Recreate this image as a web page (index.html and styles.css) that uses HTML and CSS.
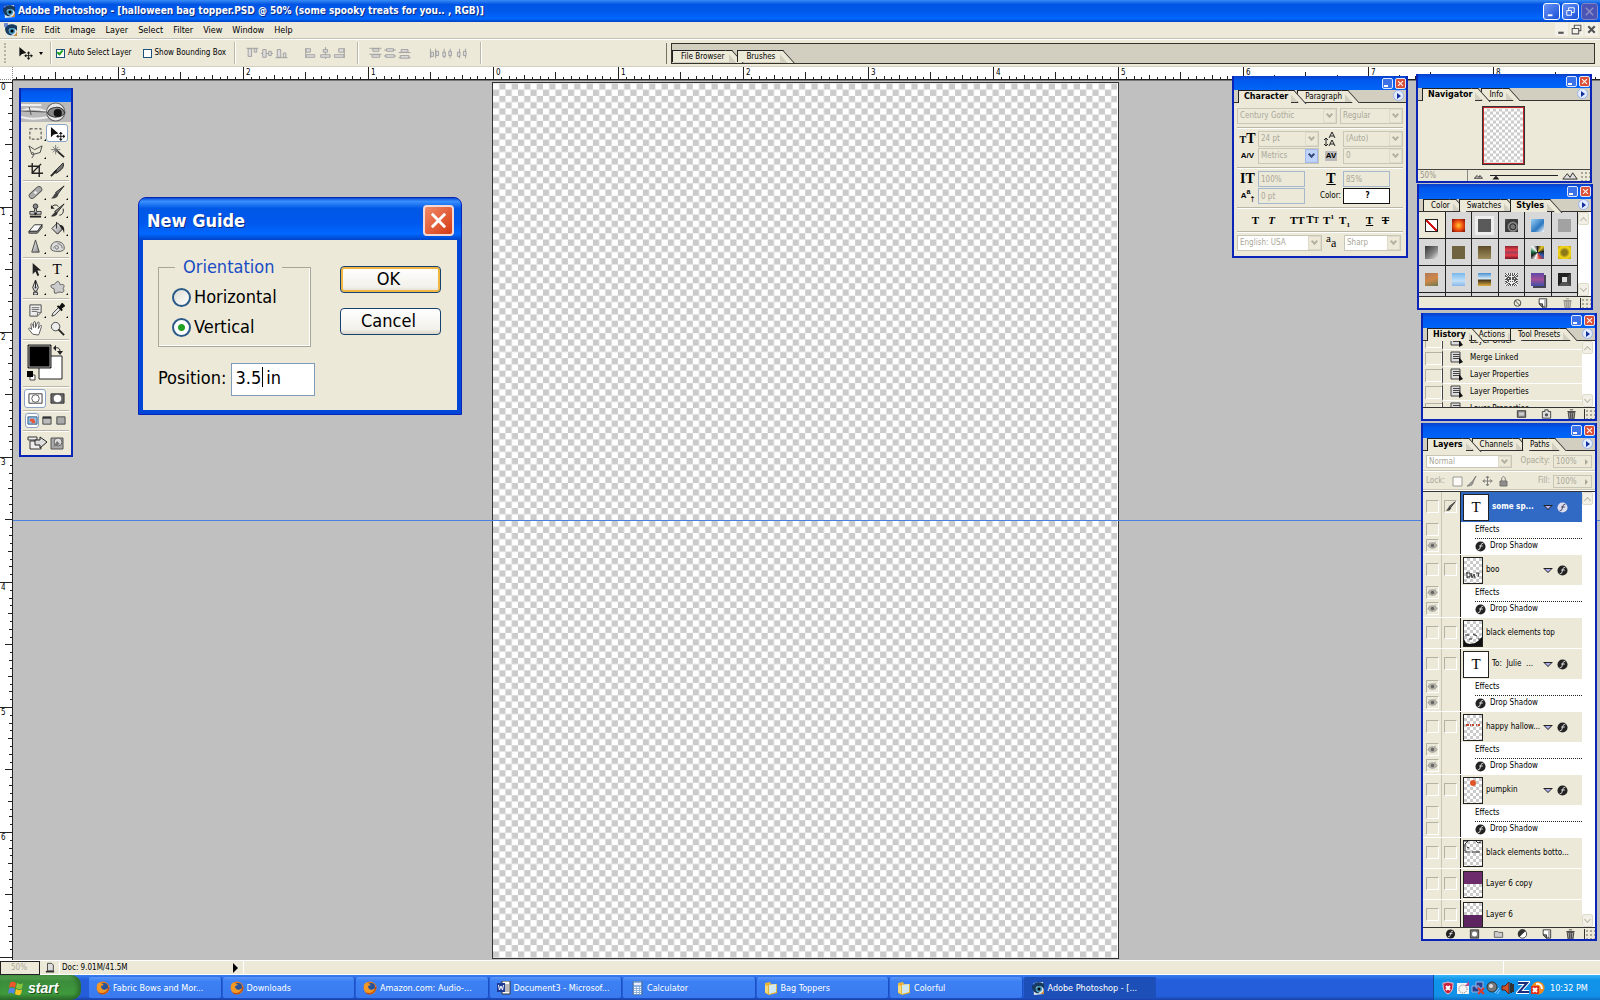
FILE: index.html
```html
<!DOCTYPE html>
<html lang="en">
<head>
    <meta charset="UTF-8">
    <meta name="viewport" content="width=device-width, initial-scale=1.0">
    <title>Adobe Photoshop - [halloween bag topper.PSD]</title>
    <link rel="stylesheet" href="styles.css">
</head>
<body>
    <svg class="defs" aria-hidden="true">
        <defs>
            <linearGradient id="metal" x1="0" y1="0" x2="1" y2="1"><stop offset="0" stop-color="#fff"/><stop offset="1" stop-color="#888"/></linearGradient>
            <pattern id="checks" width="2" height="2" patternUnits="userSpaceOnUse">
                <rect width="2" height="2" fill="#fff"/>
                <path d="M1 0h1v1h-1zM0 1h1v1H0z" fill="#cbcbcb"/>
            </pattern>
            <pattern id="smallchecks" width="6" height="6" patternUnits="userSpaceOnUse">
                <rect width="6" height="6" fill="#fff"/>
                <path d="M3 0h3v3H3zM0 3h3v3H0z" fill="#cbcbcb"/>
            </pattern>
            <pattern id="ticks-x" x="105" width="125" height="13" patternUnits="userSpaceOnUse">
                <path d="M.5 0v13M8.5 10v3M16.5 9v4M23.5 10v3M31.5 8v5M39.5 10v3M47.5 9v4M55.5 10v3M62.5 5v8M70.5 10v3M78.5 9v4M86.5 10v3M94.5 8v5M102.5 10v3M109.5 9v4M117.5 10v3" stroke="#222"/>
            </pattern>
            <pattern id="ticks-y" y="2" width="13" height="125" patternUnits="userSpaceOnUse">
                <path d="M0 .5h13M10 8.5h3M9 16.5h4M10 23.5h3M8 31.5h5M10 39.5h3M9 47.5h4M10 55.5h3M5 62.5h8M10 70.5h3M9 78.5h4M10 86.5h3M8 94.5h5M10 102.5h3M9 109.5h4M10 117.5h3" stroke="#222"/>
            </pattern>

            <symbol id="ps" viewBox="0 0 14 14">
                <path d="M2 2l10-1 1 12-10 1z" fill="#dfeaf2"/>
                <path d="M1 5c2-4 8-5 12-2v5c-2-3-5-4-8-2-1 3 1 5 4 6-4 1-8-1-8-7z" fill="#173a5e"/>
                <circle cx="8" cy="8" r="3" fill="#3b8fb5"/><circle cx="8" cy="8" r="1.500" fill="#000"/>
                <path d="M9 13c2-1 4-3 4-6v6z" fill="#c98a3c"/><path d="M0 0h4v4H0z" fill="#1c50c8" opacity=".6"/>
            </symbol>
            <symbol id="movetool" viewBox="0 0 16 16">
                <path d="M1 1v11l3-3 5-1z" fill="#111"/>
                <path d="M11.500 7v8M7.500 11h8" stroke="#111"/><path d="M11.500 6l2 2.500h-4zM11.500 16l2-2.500h-4zM6.500 11L9 9v4zM16.500 11L14 9v4z" fill="#111"/>
            </symbol>
            <symbol id="marquee" viewBox="0 0 16 16"><rect x="2" y="3" width="12" height="11" fill="none" stroke="#333" stroke-dasharray="3 2"/></symbol>
            <symbol id="lasso" viewBox="0 0 16 16"><path d="M4 11L1 2l6 4 8-4-2 7-7 2c-2 1-3-1-1-2 2 0 1 4-1 6" fill="none" stroke="#444"/></symbol>
            <symbol id="wand" viewBox="0 0 16 16"><path d="M6 6l9 8" stroke="#222" stroke-width="2"/><path d="M6 1v10M1 6h10M3 3l6 6M9 3L3 9" stroke="#777"/></symbol>
            <symbol id="crop" viewBox="0 0 16 16"><path d="M4.500 1v11H16M0 4.500h12V16M4 12L14 2" fill="none" stroke="#222" stroke-width="1.500"/></symbol>
            <symbol id="slice" viewBox="0 0 16 16"><path d="M4 11L14 1c1 3 0 5-2 7l-5 4z" fill="#777" stroke="#222"/><path d="M1 15l6-6" stroke="#222" stroke-width="2"/></symbol>
            <symbol id="heal" viewBox="0 0 16 16"><rect x="0" y="5" width="16" height="6" rx="3" transform="rotate(-42 8 8)" fill="#aaa" stroke="#555"/><path d="M6 8l2-2 2 2-2 2z" fill="#eee"/></symbol>
            <symbol id="brush" viewBox="0 0 16 16"><path d="M15 1L8 10 6 8z" fill="#777" stroke="#222"/><path d="M7 8l2 2c-1 4-5 5-8 4 3-1 3-5 6-6z" fill="#444"/></symbol>
            <symbol id="stamp" viewBox="0 0 16 16"><circle cx="8" cy="3.500" r="2.500" fill="#888" stroke="#333"/><path d="M7 6h2v3h5v3H2V9h5z" fill="#ccc" stroke="#333"/><path d="M6 10h4l-2 3z" fill="#111"/><path d="M2 14.500h12" stroke="#222" stroke-width="2"/></symbol>
            <symbol id="histbrush" viewBox="0 0 16 16"><path d="M15 1L7 11 5 9z" fill="#888" stroke="#222"/><path d="M6 9l2 2c-1 3-4 4-7 3z" fill="#333"/><path d="M2 4c3-3 6-2 7 0M14 6c1 4-1 7-4 7" fill="none" stroke="#222"/><path d="M1 2v4h4z" fill="#222"/></symbol>
            <symbol id="eraser" viewBox="0 0 16 16"><path d="M1 11l6-7h8l-5 7z" fill="#f8f8f8" stroke="#333"/><path d="M10 11l5-7v3l-5 6H1v-2z" fill="#999" stroke="#333"/></symbol>
            <symbol id="bucket" viewBox="0 0 16 16"><path d="M2 8l6-6 6 6-6 6z" fill="url(#metal)" stroke="#222"/><path d="M7 8V1" stroke="#222"/><path d="M10 4c4 0 6 3 5 9-1-3-1-4-3-5z" fill="#222"/></symbol>
            <symbol id="sharpen" viewBox="0 0 16 16"><path d="M8 1l4 13H4z" fill="url(#metal)" stroke="#444"/></symbol>
            <symbol id="sponge" viewBox="0 0 16 16"><path d="M1 9c0-4 4-7 8-6 4 0 7 4 6 8-1 3-12 3-14 0z" fill="#ddd" stroke="#555"/><path d="M4 10c0-3 5-4 5-1s-4 2-3 0M8 5c3 0 5 2 5 5" fill="none" stroke="#666"/></symbol>
            <symbol id="select" viewBox="0 0 16 16"><path d="M5 1v12l3-3 2 5 2-1-2-5h4z" fill="#222"/></symbol>
            <symbol id="pen" viewBox="0 0 16 16"><path d="M8 0l3 8-2 4H7L5 8zM6 13h4v3H6z" fill="#ddd" stroke="#222"/><path d="M8 1v7" stroke="#222"/><circle cx="8" cy="8" r="1" fill="#222"/></symbol>
            <symbol id="shape" viewBox="0 0 16 16"><path d="M7 2c3-2 3 2 4 3 4-1 5 1 3 4 2 3 0 5-3 4-2-1-4 2-6 1-1-2 0-3-1-5-3 0-4-3-2-4 2 0 3 0 5-3z" fill="#ccc" stroke="#555"/></symbol>
            <symbol id="note" viewBox="0 0 16 16"><path d="M2 2h12v8l-4 4H2z" fill="#eee" stroke="#444"/><path d="M4 5h8M4 7h8M4 9h6M10 14v-4h4" fill="none" stroke="#666"/></symbol>
            <symbol id="dropper" viewBox="0 0 16 16"><path d="M2 14l1-3 7-7 2 2-7 7z" fill="#eee" stroke="#333"/><path d="M8 3l5 5M10 5l3-4 2 2-4 3z" stroke="#111" stroke-width="2"/></symbol>
            <symbol id="hand" viewBox="0 0 16 16"><path d="M5 14L1 9c-1-2 1-2 3 0L3 4c0-2 2-1 2 0l1 3V2c0-2 2-2 2 0v5l2-5c0-1 2-1 2 0l-1 6 2-3c1-1 2 0 1 2-1 3-2 7-3 8z" fill="#fff" stroke="#555"/></symbol>
            <symbol id="loupe" viewBox="0 0 16 16"><circle cx="6" cy="6" r="4.500" fill="#eee" stroke="#444"/><path d="M9 9l6 6" stroke="#222" stroke-width="2"/></symbol>
            <symbol id="fx" viewBox="0 0 12 12"><circle cx="6" cy="6" r="5.500" fill="#222"/><path d="M3 9c2 1 2 0 3-3s1-4 3-3M4.500 5.500h4" fill="none" stroke="#eee"/></symbol>
            <symbol id="fxlight" viewBox="0 0 12 12"><circle cx="6" cy="6" r="5.500" fill="#dde"/><path d="M3 9c2 1 2 0 3-3s1-4 3-3M4.500 5.500h4" fill="none" stroke="#335"/></symbol>
            <symbol id="eye" viewBox="0 0 12 12"><path d="M1 6c2-4 8-4 10 0-2 4-8 4-10 0z" fill="#bbb8a8" stroke="#999"/><circle cx="6" cy="6" r="2" fill="#666"/><path d="M2 3l2 1M8 3l2-1" stroke="#aaa"/></symbol>
            <symbol id="trash" viewBox="0 0 12 12"><path d="M2 4h8l-1 8H3z" fill="#999" stroke="#333"/><path d="M1 3h10M4 1h4M5 5v6M7 5v6" stroke="#333"/></symbol>
            <symbol id="newpage" viewBox="0 0 12 12"><path d="M2 1h9v10H6L2 7z" fill="#fff" stroke="#222"/><path d="M2 7h4v4z" fill="#999" stroke="#222"/><path d="M9 2v8H6" fill="none" stroke="#555"/></symbol>
            <symbol id="state" viewBox="0 0 14 14"><path d="M1 1h9v10H1z" fill="#ddd" stroke="#444"/><path d="M3 3.500h7M3 5.500h7M3 7.500h6" stroke="#444"/><path d="M9 6v7l4-2z" fill="#111"/></symbol>
            <symbol id="fox" viewBox="0 0 14 14"><circle cx="7" cy="7" r="6.500" fill="#e57818"/><circle cx="8" cy="6" r="4" fill="#27539c"/><path d="M1 4c1-3 3-3 4-2l3 2-3 1c0 4 4 5 7 2-1 6-11 7-11 0z" fill="#f39a26"/><path d="M3 12c4 2 9 0 10-6" fill="none" stroke="#b5400c"/></symbol>
            <symbol id="word" viewBox="0 0 14 14"><path d="M5 0h8v13H5z" fill="#fff" stroke="#333"/><path d="M8 4h4M8 6h4M8 8h4M8 10h4" stroke="#777"/><path d="M0 2h8v9H0z" fill="#1d3a94"/><path d="M1.500 4l1 5 1.500-4 1.500 4 1-5" fill="none" stroke="#fff"/></symbol>
            <symbol id="calc" viewBox="0 0 14 14"><path d="M3 0h9v14H3z" fill="#8fb2dd" stroke="#4a6c9b"/><path d="M4 2h7v2H4z" fill="#eef"/><path d="M4 6.500h7M4 8.500h7M4 10.500h7M4 12.500h7" stroke="#fff" stroke-dasharray="2 1"/></symbol>
            <symbol id="folder" viewBox="0 0 14 14"><path d="M1 2l5-1 1 2h6v9l-8 2-4-2z" fill="#e8b43a"/><path d="M5 4l7-1v8l-7 2z" fill="#cfe8f2"/><path d="M1 4l3 1v8l-3-2z" fill="#f7da7a"/></symbol>
        </defs>
    </svg>

    <header class="titlebar">
        <svg class="app-icon"><use href="#ps"/></svg>
        <h1>Adobe Photoshop - [halloween bag topper.PSD @ 50% (some spooky treats for you.. , RGB)]</h1>
        <div class="window-buttons">
            <button class="win" aria-label="Minimize"><svg viewBox="0 0 16 16"><path d="M4 12h5" stroke="#fff" stroke-width="2"/></svg></button>
            <button class="win" aria-label="Restore"><svg viewBox="0 0 16 16"><path d="M6 7V4h6v5H9M4 7h5v5H4z" fill="none" stroke="#fff"/></svg></button>
            <button class="win faded" aria-label="Close"><svg viewBox="0 0 16 16"><path d="M4 4l8 8M12 4l-8 8" stroke="#8f8fc4" stroke-width="1.500"/></svg></button>
        </div>
    </header>

    <nav class="menubar">
        <svg class="app-icon"><use href="#ps"/></svg>
        <button>File</button><button>Edit</button><button>Image</button><button>Layer</button><button>Select</button><button>Filter</button><button>View</button><button>Window</button><button>Help</button>
        <div class="doc-buttons">
            <button aria-label="Minimize document"><svg viewBox="0 0 12 12"><path d="M3 9h5" stroke="#555" stroke-width="2"/></svg></button>
            <button aria-label="Restore document"><svg viewBox="0 0 12 12"><path d="M4 5V2h6v5H8M2 5h6v5H2z" fill="none" stroke="#555"/></svg></button>
            <button aria-label="Close document"><svg viewBox="0 0 12 12"><path d="M3 3l6 6M9 3L3 9" stroke="#555" stroke-width="2"/></svg></button>
        </div>
    </nav>

    <div class="options">
        <div class="options-tools">
            <span class="grip"></span>
            <button class="current-tool" aria-label="Move tool"><svg><use href="#movetool"/></svg><i></i></button>
            <span class="vline"></span>
            <label class="check"><input type="checkbox" checked>Auto Select Layer</label>
            <label class="check second"><input type="checkbox">Show Bounding Box</label>
            <span class="vline"></span>
            <div class="align">
                <svg viewBox="0 0 48 14"><path d="M0 1.500h14M17 7.500h14M34 12.500h14" stroke="#999"/><path d="M2 2h4v9H2zM9 2h3v4H9zM19 3h4v9h-4zM26 5h3v5h-3zM36 3h4v9h-4zM43 7h3v5h-3z" fill="#ddd" stroke="#999"/></svg>
                <svg viewBox="0 0 48 14"><path d="M1.500 1v12M24.500 0v14M46.500 1v12" stroke="#999"/><path d="M2 2h5v4H2zM2 9h10v3H2zM22 3h5v3h-5zM19 9h11v3H19zM40 2h6v4h-6zM35 9h11v3H35z" fill="#ddd" stroke="#999"/></svg>
            </div>
            <span class="vline"></span>
            <div class="align">
                <svg viewBox="0 0 48 14"><path d="M0 1.500h14M0 8.500h14M17 3.500h14M17 10.500h14M34 6.500h14M34 12.500h14" stroke="#999"/><path d="M4 2h7v3H4zM3 9h9v3H3zM20 2h8v3h-8zM19 9h10v3H19zM37 3h8v3h-8zM36 10h10v3H36z" fill="#ddd" stroke="#999"/></svg>
                <svg viewBox="0 0 48 14"><path d="M3.500 2v11M9.500 2v11M19.500 2v11M26.500 2v11M37.500 2v11M44.500 2v11" stroke="#999"/><path d="M4 6h3v5H4zM10 5h3v5h-3zM18 6h3v5h-3zM25 5h3v5h-3zM35 6h3v5h-3zM42 5h3v5h-3z" fill="#ddd" stroke="#999"/></svg>
            </div>
            <span class="vline"></span>
        </div>
        <div class="well">
            <div class="tabs"><button class="tab">File Browser</button><button class="tab">Brushes</button></div>
        </div>
    </div>

    <main class="workspace">
        <div class="ruler-corner"></div>
        <svg class="ruler-x">
            <rect width="100%" height="13" fill="url(#ticks-x)"/>
            <text x="108" y="8">3</text><text x="233" y="8">2</text><text x="358" y="8">1</text><text x="483" y="8">0</text><text x="608" y="8">1</text><text x="733" y="8">2</text><text x="858" y="8">3</text><text x="983" y="8">4</text><text x="1108" y="8">5</text><text x="1233" y="8">6</text><text x="1358" y="8">7</text><text x="1483" y="8">8</text>
        </svg>
        <svg class="ruler-y">
            <rect width="13" height="100%" fill="url(#ticks-y)"/>
            <text x="1" y="10">0</text><text x="1" y="135">1</text><text x="1" y="260">2</text><text x="1" y="385">3</text><text x="1" y="510">4</text><text x="1" y="635">5</text><text x="1" y="760">6</text>
        </svg>
        <div class="canvas">
            <svg class="document" viewBox="0 0 100 140" shape-rendering="crispEdges"><rect width="100" height="140" fill="url(#checks)"/></svg>
            <div class="guide"></div>
        </div>

        <section class="toolbox" aria-label="Tools">
            <div class="palette-title"></div>
            <svg class="banner" viewBox="0 0 49 20" preserveAspectRatio="none">
                <rect width="49" height="20" fill="#b9b9b9"/>
                <path d="M0 9c8-3 17-3 26 1M0 3h20M0 15c9 3 18 2 27 0" fill="none" stroke="#eee" stroke-width="2"/>
                <path d="M0 9l25 1M8 5l2 8" stroke="#555"/>
                <circle cx="34" cy="10" r="9" fill="#e8e8e8" stroke="#666"/>
                <path d="M26 11c2-7 14-8 17 0-4 5-13 6-17 0z" fill="#888" stroke="#333"/>
                <circle cx="36" cy="11" r="4" fill="#111"/>
            </svg>
            <div class="tool-group">
                <button class="more" aria-label="Marquee"><svg><use href="#marquee"/></svg></button>
                <button class="active" aria-label="Move"><svg><use href="#movetool"/></svg></button>
                <button class="more" aria-label="Lasso"><svg><use href="#lasso"/></svg></button>
                <button aria-label="Magic wand"><svg><use href="#wand"/></svg></button>
                <button aria-label="Crop"><svg><use href="#crop"/></svg></button>
                <button class="more" aria-label="Slice"><svg><use href="#slice"/></svg></button>
            </div>
            <div class="tool-group">
                <button class="more" aria-label="Healing brush"><svg><use href="#heal"/></svg></button>
                <button class="more" aria-label="Brush"><svg><use href="#brush"/></svg></button>
                <button class="more" aria-label="Clone stamp"><svg><use href="#stamp"/></svg></button>
                <button class="more" aria-label="History brush"><svg><use href="#histbrush"/></svg></button>
                <button class="more" aria-label="Eraser"><svg><use href="#eraser"/></svg></button>
                <button class="more" aria-label="Paint bucket"><svg><use href="#bucket"/></svg></button>
                <button class="more" aria-label="Sharpen"><svg><use href="#sharpen"/></svg></button>
                <button class="more" aria-label="Sponge"><svg><use href="#sponge"/></svg></button>
            </div>
            <div class="tool-group">
                <button class="more" aria-label="Path selection"><svg><use href="#select"/></svg></button>
                <button class="more type">T</button>
                <button class="more" aria-label="Pen"><svg><use href="#pen"/></svg></button>
                <button class="more" aria-label="Custom shape"><svg><use href="#shape"/></svg></button>
            </div>
            <div class="tool-group">
                <button class="more" aria-label="Notes"><svg><use href="#note"/></svg></button>
                <button class="more" aria-label="Eyedropper"><svg><use href="#dropper"/></svg></button>
                <button aria-label="Hand"><svg><use href="#hand"/></svg></button>
                <button aria-label="Zoom"><svg><use href="#loupe"/></svg></button>
            </div>
            <div class="tool-group colors">
                <svg viewBox="0 0 44 40">
                    <path d="M15 12h23v23H15z" fill="#fff" stroke="#222"/>
                    <path d="M4 1h23v23H4z" fill="#000" stroke="#222"/><path d="M5 2h21v21H5z" fill="none" stroke="#aaa"/>
                    <path d="M6 31h5v5H6z" fill="#fff" stroke="#444"/><path d="M3 27h6v6H3z" fill="#000"/>
                    <path d="M31 4c4-1 5 1 5 4" fill="none" stroke="#222"/><path d="M29 4l3-3v6zM33 7h6l-3 4z" fill="#222"/>
                </svg>
            </div>
            <div class="tool-group modes">
                <button class="active" aria-label="Standard mode"><svg viewBox="0 0 16 12"><path d="M1 1h14v10H1z" fill="#fff" stroke="#333"/><circle cx="8" cy="6" r="4" fill="#fff" stroke="#555"/></svg></button>
                <button aria-label="Quick mask mode"><svg viewBox="0 0 16 12"><path d="M1 1h14v10H1z" fill="#666" stroke="#333"/><circle cx="8" cy="6" r="4" fill="#fff"/></svg></button>
            </div>
            <div class="tool-group screens">
                <button class="active" aria-label="Standard screen"><svg viewBox="0 0 12 12"><path d="M1 2h10v8H1z" fill="#8fc4ef" stroke="#357"/><path d="M3 4h5v3H3zM5 6h4v3H5z" fill="#e85a3c"/></svg></button>
                <button aria-label="Full screen with menus"><svg viewBox="0 0 12 12"><path d="M2 2h9v8H2z" fill="#bbb" stroke="#444"/><path d="M2 3h9" stroke="#333" stroke-width="2"/></svg></button>
                <button aria-label="Full screen"><svg viewBox="0 0 12 12"><path d="M2 2h9v8H2z" fill="#aaa" stroke="#444"/></svg></button>
            </div>
            <div class="tool-group jump">
                <button aria-label="Jump to ImageReady"><svg viewBox="0 0 40 14"><path d="M4 5h11v8H4zM2 1h9v3H2z" fill="#eee" stroke="#333"/><path d="M9 4h5V1l7 5-7 6V9H9z" fill="#ddd" stroke="#222"/><path d="M25 2h12v11H25z" fill="#aaa" stroke="#555"/><circle cx="32" cy="6" r="4" fill="#ddd" stroke="#666"/><path d="M27 11l4-6 3 3z" fill="#777"/></svg></button>
            </div>
        </section>

        <section class="dialog" role="dialog" aria-label="New Guide">
            <header><h2>New Guide</h2><button class="dialog-close" aria-label="Close"><svg viewBox="0 0 20 20"><path d="M3 3l14 14M17 3L3 17" stroke="#fff" stroke-width="3"/></svg></button></header>
            <form>
                <div class="fields">
                    <fieldset>
                        <legend>Orientation</legend>
                        <label><input type="radio" name="orientation">Horizontal</label>
                        <label><input type="radio" name="orientation" checked>Vertical</label>
                    </fieldset>
                    <div class="position">
                        <label for="position">Position:</label>
                        <div class="entry"><input type="text" id="position" value="3.5 in"><i class="caret"></i></div>
                    </div>
                </div>
                <div class="actions">
                    <button type="button" class="xp default">OK</button>
                    <button type="button" class="xp">Cancel</button>
                </div>
            </form>
        </section>

        <section class="palette character">
            <div class="palette-title"><button class="min" aria-label="Minimize"></button><button class="close" aria-label="Close"></button></div>
            <div class="tabs"><button class="tab on">Character</button><button class="tab">Paragraph</button><button class="flyout" aria-label="Palette menu"></button></div>
            <div class="char-row font-row">
                <span class="drop"><select aria-label="Font family" disabled><option>Century Gothic</option></select></span>
                <span class="drop"><select aria-label="Font style" disabled><option>Regular</option></select></span>
            </div>
            <div class="char-grid">
                <b class="glyph"><small>T</small>T</b><span class="drop"><select aria-label="Font size" disabled><option>24 pt</option></select></span>
                <b class="glyph"><svg viewBox="0 0 14 14"><path d="M5 6l3-6 3 6M6 4h4M5 14l3-6 3 6M6 12h4M2 6v8M0 8l2-2 2 2M0 12l2 2 2-2" fill="none" stroke="#222"/></svg></b><span class="drop"><select aria-label="Leading" disabled><option>(Auto)</option></select></span>
                <b class="glyph tiny">A/V</b><span class="drop lit"><select aria-label="Kerning" disabled><option>Metrics</option></select></span>
                <b class="glyph tiny shade">AV</b><span class="drop"><select aria-label="Tracking" disabled><option>0</option></select></span>
            </div>
            <div class="char-grid">
                <b class="glyph">IT</b><input type="text" aria-label="Vertical scale" value="100%" disabled>
                <b class="glyph heavy">T</b><input type="text" aria-label="Horizontal scale" value="85%" disabled>
                <b class="glyph tiny">A<sup>a</sup><sub>†</sub></b><input type="text" aria-label="Baseline shift" value="0 pt" disabled>
                <span class="color-label">Color:</span><button class="color-box">?</button>
            </div>
            <div class="char-row styles-row">
                <button><b>T</b></button><button><em>T</em></button><button class="gap">TT</button><button>T<small>T</small></button><button>T<sup>1</sup></button><button>T<sub>1</sub></button><button class="gap"><u>T</u></button><button><s>T</s></button>
            </div>
            <div class="char-row lang-row">
                <span class="drop white"><select aria-label="Language" disabled><option>English: USA</option></select></span>
                <span class="aa"><sup>a</sup>a</span>
                <span class="drop white"><select aria-label="Anti-aliasing" disabled><option>Sharp</option></select></span>
            </div>
        </section>

        <section class="palette navigator">
            <div class="palette-title"><button class="min" aria-label="Minimize"></button><button class="close" aria-label="Close"></button></div>
            <div class="tabs"><button class="tab on">Navigator</button><button class="tab">Info</button><button class="flyout" aria-label="Palette menu"></button></div>
            <div class="preview"><svg viewBox="0 0 39 54"><rect width="39" height="54" fill="url(#smallchecks)"/></svg></div>
            <div class="zoombar">
                <input type="text" aria-label="Zoom" value="50%">
                <svg viewBox="0 0 16 10"><path d="M4 8l3-3 2 2 1-2 3 3z" fill="#ddd" stroke="#222"/></svg>
                <input type="range" aria-label="Zoom slider" min="0" max="100" value="4">
                <svg viewBox="0 0 16 10"><path d="M0 9l5-6 3 4 3-5 5 7z" fill="#ddd" stroke="#222"/></svg>
                <span class="sizer"></span>
            </div>
        </section>

        <section class="palette styles">
            <div class="palette-title"><button class="min" aria-label="Minimize"></button><button class="close" aria-label="Close"></button></div>
            <div class="tabs"><button class="tab">Color</button><button class="tab">Swatches</button><button class="tab on">Styles</button><button class="flyout" aria-label="Palette menu"></button></div>
            <div class="scroller">
                <div class="swatches">
                    <i class="none"></i><i class="fire"></i><i class="plain"></i><i class="rings"></i><i class="sky"></i><i class="gray"></i>
                    <i class="steel"></i><i class="olive"></i><i class="bronze"></i><i class="red"></i><i class="mix"></i><i class="gold"></i>
                    <i class="rust"></i><i class="ice"></i><i class="horizon"></i><i class="noise"></i><i class="violet"></i><i class="coal"></i>
                    <i></i><i></i><i></i><i></i><i></i><i></i>
                </div>
                <div class="scrollbar"><button aria-label="Up"></button><button class="down" aria-label="Down"></button></div>
            </div>
            <div class="footer">
                <svg viewBox="0 0 12 12"><circle cx="6" cy="6" r="4" fill="none" stroke="#333"/><path d="M3 3l6 6" stroke="#333"/></svg>
                <svg><use href="#newpage"/></svg><svg class="dim"><use href="#trash"/></svg><span class="sizer"></span>
            </div>
        </section>

        <section class="palette history">
            <div class="palette-title"><button class="min" aria-label="Minimize"></button><button class="close" aria-label="Close"></button></div>
            <div class="tabs"><button class="tab on">History</button><button class="tab">Actions</button><button class="tab">Tool Presets</button><button class="flyout" aria-label="Palette menu"></button></div>
            <div class="scroller">
                <ul class="states">
                    <li><i></i><svg><use href="#state"/></svg>Layer Order</li>
                    <li><i></i><svg><use href="#state"/></svg>Merge Linked</li>
                    <li><i></i><svg><use href="#state"/></svg>Layer Properties</li>
                    <li><i></i><svg><use href="#state"/></svg>Layer Properties</li>
                    <li><i></i><svg><use href="#state"/></svg>Layer Properties</li>
                </ul>
                <div class="scrollbar"><button aria-label="Up"></button><button class="down" aria-label="Down"></button></div>
            </div>
            <div class="footer">
                <svg viewBox="0 0 12 12"><path d="M1 2h10v8H1z" fill="#888" stroke="#333"/><path d="M3 4h6v4H3z" fill="#ccc"/></svg>
                <svg viewBox="0 0 12 12"><path d="M1 3h3V1h4v2h3v8H1z" fill="#ddd" stroke="#333"/><circle cx="6" cy="7" r="2" fill="#555"/></svg>
                <svg><use href="#trash"/></svg><span class="sizer"></span>
            </div>
        </section>

        <section class="palette layers">
            <div class="palette-title"><button class="min" aria-label="Minimize"></button><button class="close" aria-label="Close"></button></div>
            <div class="tabs"><button class="tab on">Layers</button><button class="tab">Channels</button><button class="tab">Paths</button><button class="flyout" aria-label="Palette menu"></button></div>
            <div class="layer-options">
                <span class="drop white"><select aria-label="Blend mode" disabled><option>Normal</option></select></span>
                <label for="opacity">Opacity:</label><span class="amount"><input type="text" id="opacity" value="100%" disabled></span>
            </div>
            <div class="layer-options lock">
                <span>Lock:</span>
                <svg viewBox="0 0 60 12"><path d="M1 2h9v9H1z" fill="#fff" stroke="#888"/><path d="M24 1l-4 6c-2 0-2 3-5 4 4 0 6-1 6-4z" fill="#888" stroke="#666"/><path d="M35.500 1v10M30.500 6h10M34 3l1.500-2L37 3M34 9l1.500 2L37 9M33 4.500L31 6l2 1.500M38 4.500L40 6l-2 1.500" fill="none" stroke="#666"/><path d="M48 6h7v5h-7z" fill="#777" stroke="#555"/><path d="M49.500 6c0-6 4-6 4 0" fill="none" stroke="#666"/></svg>
                <label for="fill">Fill:</label><span class="amount"><input type="text" id="fill" value="100%" disabled></span>
            </div>
            <div class="scroller">
                <ul class="stack">
                    <li class="layer current"><i></i><i class="linked"><svg><use href="#brush"/></svg></i><div><b class="thumb text">T</b><span>some sp...</span><u></u><svg><use href="#fxlight"/></svg></div></li>
                    <li class="effect"><i></i><i></i><div>Effects</div></li>
                    <li class="effect shadow"><i><svg><use href="#eye"/></svg></i><i></i><div><svg><use href="#fx"/></svg>Drop Shadow</div></li>
                    <li class="layer"><i></i><i></i><div><svg class="thumb" viewBox="0 0 18 25"><rect width="18" height="25" fill="url(#smallchecks)"/><path d="M2 15h4v4H3M7 15l1 5 2-4 1 4M12 15h3l-1 4M3 14v6" fill="none" stroke="#333"/></svg><span>boo</span><u></u><svg><use href="#fx"/></svg></div></li>
                    <li class="effect"><i><svg><use href="#eye"/></svg></i><i></i><div>Effects</div></li>
                    <li class="effect shadow"><i><svg><use href="#eye"/></svg></i><i></i><div><svg><use href="#fx"/></svg>Drop Shadow</div></li>
                    <li class="layer"><i></i><i></i><div><svg class="thumb" viewBox="0 0 18 25"><rect width="18" height="25" fill="url(#smallchecks)"/><path d="M0 25v-7l2 4 4 1 5-1 3-2 4-4v9z" fill="#111"/><path d="M1 14h4M9 13l4 2M14 18h3M5 18h3" stroke="#222"/></svg><span>black elements top</span></div></li>
                    <li class="layer"><i></i><i></i><div><b class="thumb text">T</b><span>To:&nbsp; Julie&nbsp; ...</span><u></u><svg><use href="#fx"/></svg></div></li>
                    <li class="effect"><i><svg><use href="#eye"/></svg></i><i></i><div>Effects</div></li>
                    <li class="effect shadow"><i><svg><use href="#eye"/></svg></i><i></i><div><svg><use href="#fx"/></svg>Drop Shadow</div></li>
                    <li class="layer"><i></i><i></i><div><svg class="thumb" viewBox="0 0 18 25"><rect width="18" height="25" fill="url(#smallchecks)"/><path d="M2 10h3M6 10h1M8 10h2M12 10h1M14 10h2" stroke="#c1442b" stroke-width="2"/></svg><span>happy hallow...</span><u></u><svg><use href="#fx"/></svg></div></li>
                    <li class="effect"><i><svg><use href="#eye"/></svg></i><i></i><div>Effects</div></li>
                    <li class="effect shadow"><i><svg><use href="#eye"/></svg></i><i></i><div><svg><use href="#fx"/></svg>Drop Shadow</div></li>
                    <li class="layer"><i></i><i></i><div><svg class="thumb" viewBox="0 0 18 25"><rect width="18" height="25" fill="url(#smallchecks)"/><ellipse cx="9" cy="5" rx="3" ry="3" fill="#e2552a"/></svg><span>pumpkin</span><u></u><svg><use href="#fx"/></svg></div></li>
                    <li class="effect"><i></i><i></i><div>Effects</div></li>
                    <li class="effect shadow"><i></i><i></i><div><svg><use href="#fx"/></svg>Drop Shadow</div></li>
                    <li class="layer"><i></i><i></i><div><svg class="thumb" viewBox="0 0 18 25"><rect width="18" height="25" fill="url(#smallchecks)"/><path d="M0 0h4l-3 3v7M12 0l2 2 3-1M1 11h5M8 11h8M3 6l2 1" fill="none" stroke="#222"/></svg><span>black elements botto...</span></div></li>
                    <li class="layer"><i></i><i></i><div><svg class="thumb" viewBox="0 0 18 25"><rect width="18" height="25" fill="url(#smallchecks)"/><rect width="18" height="12" fill="#6d2c6b"/></svg><span>Layer 6 copy</span></div></li>
                    <li class="layer"><i></i><i></i><div><svg class="thumb" viewBox="0 0 18 25"><rect width="18" height="25" fill="url(#smallchecks)"/><rect y="12" width="18" height="13" fill="#5d2560"/></svg><span>Layer 6</span></div></li>
                </ul>
                <div class="scrollbar"><button aria-label="Up"></button><button class="down" aria-label="Down"></button></div>
            </div>
            <div class="footer">
                <svg><use href="#fx"/></svg>
                <svg viewBox="0 0 12 12"><path d="M1 1h10v10H1z" fill="#777" stroke="#333"/><circle cx="6" cy="6" r="3" fill="#fff"/></svg>
                <svg viewBox="0 0 12 12"><path d="M1 3h4l1 1h5v6H1z" fill="#ccc" stroke="#555"/></svg>
                <svg viewBox="0 0 12 12"><circle cx="6" cy="6" r="5" fill="#fff" stroke="#333"/><path d="M2 10A5 5 0 0 1 10 2z" fill="#333"/></svg>
                <svg><use href="#newpage"/></svg>
                <svg><use href="#trash"/></svg><span class="sizer"></span>
            </div>
        </section>
    </main>

    <div class="status">
        <input type="text" aria-label="Zoom level" value="50%">
        <svg viewBox="0 0 12 12"><path d="M3 1h5l2 2v7H3z" fill="#ddd" stroke="#333"/><path d="M1 11h10" stroke="#333" stroke-width="2"/></svg>
        <span class="doc-size">Doc: 9.01M/41.5M</span>
        <button aria-label="Status menu"></button>
        <span class="status-space"></span>
        <span class="status-end"></span>
    </div>

    <footer class="taskbar">
        <button class="start"><svg viewBox="0 0 16 16"><path d="M2 3c2-2 4-1 6 0l-1 5c-2-1-4-2-6 0z" fill="#f0562b"/><path d="M9 3c2 1 4 2 6 0l-1 5c-2 2-4 1-6 0z" fill="#8cc63f"/><path d="M1 9c2-2 4-1 6 0l-1 5c-2-1-4-2-6 0z" fill="#4f86e8"/><path d="M8 9c2 1 4 2 6 0l-1 5c-2 2-4 1-6 0z" fill="#fbc521"/></svg>start</button>
        <div class="tasks">
            <button><svg><use href="#fox"/></svg>Fabric Bows and Mor...</button>
            <button><svg><use href="#fox"/></svg>Downloads</button>
            <button><svg><use href="#fox"/></svg>Amazon.com: Audio-...</button>
            <button><svg><use href="#word"/></svg>Document3 - Microsof...</button>
            <button><svg><use href="#calc"/></svg>Calculator</button>
            <button><svg><use href="#folder"/></svg>Bag Toppers</button>
            <button><svg><use href="#folder"/></svg>Colorful</button>
            <button class="pressed"><svg><use href="#ps"/></svg>Adobe Photoshop - [...</button>
        </div>
        <div class="tray">
            <svg viewBox="0 0 14 14"><path d="M7 1c2 1 4 1 5 1 0 6-1 9-5 11-4-2-5-5-5-11 1 0 3 0 5-1z" fill="#c8203a" stroke="#f3c6cc"/><path d="M5 5l4 4M9 5L5 9" stroke="#fff" stroke-width="2"/></svg>
            <svg viewBox="0 0 14 14"><path d="M1 2h12v11H1z" fill="#f4f4f4"/><circle cx="7" cy="8" r="4" fill="none" stroke="#777" stroke-dasharray="1 1"/><path d="M9 5l4-5v5z" fill="#c04a8c"/></svg>
            <svg viewBox="0 0 14 14"><path d="M5 1h7v6H5zM1 5h7v6H1z" fill="#27408f" stroke="#9fb2e0"/><path d="M7 7l6 6M13 7l-6 6" stroke="#e0352b" stroke-width="2"/></svg>
            <svg viewBox="0 0 14 14"><circle cx="6" cy="6" r="5" fill="#777" stroke="#333"/><circle cx="5" cy="5" r="2" fill="#ddd"/><path d="M9 12l4-5M11 13l3-4" stroke="#9fd0ff"/></svg>
            <svg viewBox="0 0 14 14"><path d="M1 5h3l4-4v12L4 9H1z" fill="#d2532a" stroke="#5a2010"/><path d="M10 2v10M12 3v8" stroke="#333" stroke-width="2"/></svg>
            <svg viewBox="0 0 14 14"><path d="M2 2h9L3 11h10" fill="none" stroke="#fff" stroke-width="4"/><path d="M2 2h9L3 11h10" fill="none" stroke="#1c2c7c" stroke-width="2"/></svg>
            <svg viewBox="0 0 14 14"><circle cx="7" cy="7" r="6.500" fill="#f08a1c"/><path d="M5 3c4-1 6 2 6 5" fill="none" stroke="#fff" stroke-width="2"/><path d="M0 5h8v8H0z" fill="#e0301c"/><path d="M2 7l4 4M6 7l-4 4" stroke="#fff" stroke-width="2"/></svg>
            <time>10:32 PM</time>
        </div>
    </footer>
</body>
</html>
```
FILE: styles.css
```css
* {
    box-sizing: border-box;
}
body {
    margin: 0;
    height: 100vh;
    display: flex;
    flex-direction: column;
    overflow: hidden;
    background: #ece9d8;
    color: #000;
    font: 8px/12px "DejaVu Sans Condensed", "DejaVu Sans", sans-serif;
}
button, input, select {
    font: inherit;
    color: inherit;
    margin: 0;
    padding: 0;
    border: 0;
    background: none;
    border-radius: 0;
    appearance: none;
}
h1, h2, ul {
    margin: 0;
    padding: 0;
    list-style: none;
}
svg {
    flex: none;
}
.defs {
    position: absolute;
    width: 0;
    height: 0;
}

/* title bar and menus */
.titlebar {
    flex: none;
    height: 22px;
    display: flex;
    align-items: center;
    padding: 0 2px;
    background: linear-gradient(#3a8cf5 0, #0054e3 20%, #0058ea 50%, #0068ff 85%, #0040c0 100%);
    color: #fff;
}
.app-icon {
    width: 14px;
    height: 14px;
}
.titlebar h1 {
    flex: 1;
    margin-left: 2px;
    font-size: 10px;
    line-height: 14px;
    text-shadow: 1px 1px #0a2a80;
}
.window-buttons, .doc-buttons {
    display: flex;
    gap: 2px;
}
.win {
    width: 17px;
    height: 17px;
    border: 1px solid #fff;
    border-radius: 3px;
    background: linear-gradient(135deg, #6a94f5, #1a4fd8);
}
.win svg, .doc-buttons svg {
    display: block;
    width: 100%;
}
.faded {
    border-color: #7b85c8;
    background: #4a54b4;
}
.menubar {
    flex: none;
    height: 17px;
    display: flex;
    align-items: center;
    padding: 0 2px 1px 4px;
    border-bottom: 1px solid #c4c1b2;
    font-size: 9px;
}
.menubar > button {
    margin-left: 10px;
}
.menubar > button:first-of-type {
    margin-left: 3px;
}
.doc-buttons {
    margin-left: auto;
}
.menubar .doc-buttons button {
    width: 13px;
    height: 13px;
    background: #f4f2e8;
}

/* options bar */
.options {
    flex: none;
    height: 28px;
    display: flex;
    border-top: 1px solid #fff;
    border-bottom: 1px solid #d4d0c0;
}
.options-tools {
    flex: 0 0 671px;
    display: flex;
    align-items: center;
    padding-left: 4px;
}
.grip {
    width: 2px;
    height: 20px;
    border-left: 2px dotted #b5b2a2;
}
.current-tool {
    display: flex;
    align-items: center;
    gap: 6px;
    margin: 0 7px 0 12px;
}
.current-tool svg {
    width: 15px;
    height: 14px;
}
.current-tool i {
    border: 2px solid transparent;
    border-top: 3px solid #000;
    border-bottom: 0;
}
.vline {
    width: 2px;
    height: 22px;
    border-left: 1px solid #bab7a8;
    border-right: 1px solid #fff;
}
.check {
    display: flex;
    align-items: center;
    gap: 3px;
    margin: 0 11px 0 4px;
}
.check.second {
    margin: 0 8px 0 0;
}
.check input {
    width: 9px;
    height: 9px;
    border: 1px solid #1c5180;
    background: #fff;
    position: relative;
}
.check input:checked::after {
    content: "";
    position: absolute;
    left: 1px;
    top: -1px;
    width: 2px;
    height: 4px;
    border: solid #21a121;
    border-width: 0 2px 2px 0;
    transform: rotate(40deg);
}
.align {
    display: flex;
    gap: 10px;
    padding: 0 8px 0 7px;
}
.align svg {
    width: 48px;
    height: 12px;
}
.well {
    flex: 1;
    margin: 3px 5px 2px 0;
    border: 1px solid #33332c;
    background: #d2cfc1;
    box-shadow: -4px 0 #ece9d8, -5px 0 #777468;
    display: flex;
    align-items: flex-end;
}

/* palette tabs */
.tabs {
    display: flex;
    height: 13px;
    border-bottom: 1px solid #333;
    background: #d2cfc1;
    padding-left: 4px;
}
.well .tabs {
    padding: 0;
    border: 0;
}
.tab {
    position: relative;
    isolation: isolate;
    height: 12px;
    margin-right: 6px;
    padding: 0 3px 0 7px;
    border-left: 1px solid #222;
    border-top: 1px solid #222;
    background: #ece9d8;
    line-height: 12px;
}
.tab::after {
    content: "";
    position: absolute;
    z-index: -1;
    left: calc(100% - 4px);
    top: -1px;
    width: 6px;
    height: 12px;
    border-top: 1px solid #222;
    border-right: 1px solid #222;
    background: #ece9d8;
    transform: skewX(42deg);
    transform-origin: top;
}
.well .tab {
    margin-right: 8px;
    padding: 0 5px 0 8px;
}
.tab.on {
    z-index: 1;
    height: 13px;
    padding-left: 5px;
    font-family: "DejaVu Sans", sans-serif;
    font-weight: bold;
}
.tab.on::after {
    height: 13px;
}
.history .tab {
    margin-right: 2px;
}
.flyout {
    width: 11px;
    height: 11px;
    margin: 0 2px 0 auto;
    border: 1px solid #9bb3e8;
    border-radius: 6px;
    background: #e4ecff;
}
.flyout::before {
    content: "";
    display: block;
    margin-left: 3px;
    width: 0;
    border: 3px solid transparent;
    border-left: 4px solid #12309c;
    border-right: 0;
}

/* rulers and document */
.workspace {
    position: relative;
    flex: 1;
    min-height: 0;
    display: grid;
    grid-template: 13px 1fr / 13px 1fr;
}
.ruler-corner {
    border: dotted #888;
    border-width: 0 1px 1px 0;
    background: #fff;
}
.ruler-x, .ruler-y {
    width: 100%;
    height: 100%;
    min-height: 0;
    background: #fff;
}
.ruler-x {
    border-bottom: 1px solid #222;
}
.ruler-y {
    border-right: 1px solid #222;
}
.canvas {
    position: relative;
    min-height: 0;
    display: flex;
    justify-content: center;
    padding: 1px 2px 1px 0;
    background: #c0c0c0;
    border-top: 1px solid #777;
}
.document {
    height: 100%;
    aspect-ratio: 5 / 7;
    border: 1px solid #333;
    background: #fff;
}
.guide {
    position: absolute;
    left: 0;
    right: 0;
    top: 50%;
    height: 1px;
    margin-top: -1px;
    background: #4a7fe0;
}

/* floating windows */
.toolbox, .palette {
    position: absolute;
    border: 2px solid #0a24b8;
    border-top-width: 0;
    background: #ece9d8;
}
.palette {
    width: 176px;
}
.palette-title {
    display: flex;
    justify-content: flex-end;
    align-items: center;
    gap: 2px;
    height: 14px;
    background: linear-gradient(#0a3fc8, #0058ee 30%, #0064f8);
}
.palette-title button {
    width: 11px;
    height: 11px;
    border: 1px solid #dfe8ff;
    border-radius: 2px;
    background: #3c72e8;
}
.min::before {
    content: "";
    display: block;
    width: 4px;
    height: 2px;
    margin: 5px 0 0 1px;
    background: #fff;
}
.palette-title .close {
    position: relative;
    background: #dc5038;
}
.close::before, .close::after {
    content: "";
    position: absolute;
    left: 1px;
    top: 4px;
    width: 7px;
    height: 1px;
    background: #fff;
    transform: rotate(45deg);
}
.close::after {
    transform: rotate(-45deg);
}

/* toolbox */
.toolbox {
    left: 19px;
    top: 21px;
    width: 54px;
}
.banner {
    display: block;
    width: 100%;
    height: 20px;
}
.tool-group {
    display: grid;
    grid-template-columns: 22px 22px;
    justify-content: center;
    margin: 0 2px;
    padding: 2px 0;
    border-bottom: 1px solid #bab7a8;
    box-shadow: 0 1px #fff;
}
.tool-group button {
    position: relative;
    height: 18px;
    display: flex;
    align-items: center;
    justify-content: center;
}
.tool-group button svg {
    width: 15px;
    height: 15px;
}
.tool-group .active {
    border: 1px solid #8aa4c8;
    border-radius: 3px;
    background: #fff;
}
.more::after {
    content: "";
    position: absolute;
    right: 0;
    bottom: 1px;
    border: 1px solid #000;
    border-top-color: transparent;
    border-left-color: transparent;
}
.tool-group .type {
    font: 15px/18px "Liberation Serif", serif;
}
.tool-group.colors {
    display: block;
    height: 47px;
}
.colors svg {
    display: block;
    width: 44px;
    height: 40px;
    margin: 2px auto 0;
}
.modes button {
    height: 19px;
}
.modes button svg {
    height: 13px;
}
.tool-group.screens {
    grid-template-columns: repeat(3, 14px);
}
.tool-group.screens button {
    height: 15px;
}
.tool-group.screens button svg {
    width: 11px;
    height: 11px;
}
.tool-group.jump {
    grid-template-columns: 44px;
    padding: 3px 0;
    border: 0;
    box-shadow: none;
}
.tool-group.jump button svg {
    width: 40px;
    height: 14px;
}

/* New Guide dialog */
.dialog {
    position: absolute;
    left: 138px;
    top: 130px;
    width: 324px;
    padding: 0 4px 4px;
    border: 1px solid #0a24b8;
    border-radius: 8px 8px 0 0;
    background: #0046d8;
    font-size: 18px;
    line-height: 22px;
}
.dialog header {
    display: flex;
    align-items: center;
    justify-content: space-between;
    height: 42px;
    margin: 0 -4px;
    padding: 3px 7px 0 8px;
    border-radius: 7px 7px 0 0;
    background: linear-gradient(#0a4cd0 0, #3a90ff 8%, #0058e6 25%, #0058ee 60%, #0068ff 85%, #0044c8 100%);
}
.dialog h2 {
    font-size: 18px;
    line-height: 22px;
    color: #fff;
    text-shadow: 1px 1px #0a2a80;
}
.dialog-close {
    width: 31px;
    height: 31px;
    border: 2px solid #f4d8d4;
    border-radius: 4px;
    background: linear-gradient(135deg, #f08a68, #d63a12);
}
.dialog-close svg {
    display: block;
    width: 19px;
    margin: auto;
}
.dialog form {
    display: flex;
    justify-content: space-between;
    padding: 16px 16px 14px 15px;
    background: #ece9d8;
}
.dialog fieldset {
    display: grid;
    align-content: start;
    gap: 8px;
    width: 153px;
    height: 91px;
    margin: 0;
    padding: 8px 0 0 13px;
    border: 1px solid #a8a698;
    box-shadow: inset -1px -1px #fff;
}
.dialog legend {
    margin-left: 3px;
    padding: 0 8px;
    color: #1a4cc4;
}
.dialog fieldset label {
    display: flex;
    align-items: center;
    gap: 3px;
}
.dialog input[type="radio"] {
    width: 19px;
    height: 19px;
    border: 2px solid #2a5a88;
    border-radius: 50%;
    background: linear-gradient(135deg, #dcdcd4, #fff);
}
.dialog input[type="radio"]:checked {
    background: radial-gradient(circle, #21a121 3px, #fff 4px);
}
.position {
    display: flex;
    align-items: center;
    gap: 5px;
    margin-top: 16px;
}
.position label {
    padding-bottom: 4px;
}
.entry {
    position: relative;
}
.entry input {
    width: 84px;
    height: 33px;
    padding: 0 3px 4px;
    border: 1px solid #7f9db9;
    background: #fff;
}
.caret {
    position: absolute;
    left: 31px;
    top: 4px;
    width: 1px;
    height: 20px;
    background: #000;
}
.actions {
    display: flex;
    flex-direction: column;
    gap: 15px;
    padding-top: 10px;
}
.xp {
    width: 101px;
    height: 27px;
    padding: 0 4px 2px 0;
    border: 1px solid #17416e;
    border-radius: 4px;
    background: linear-gradient(#fff, #f2f1ea 80%, #dcd8c8);
}
.xp.default {
    box-shadow: inset 0 0 0 2px #f0b840;
}

/* character palette */
.drop {
    position: relative;
    display: block;
}
.drop select {
    display: block;
    width: 100%;
    height: 16px;
    padding-left: 2px;
    border: 1px solid #c9c6b6;
    color: #aaa798;
    opacity: 1;
}
.drop.white select {
    background: #fff;
}
.drop::after {
    content: "";
    position: absolute;
    right: 1px;
    top: 1px;
    width: 11px;
    height: 12px;
    border: 1px solid #dedbcb;
    background: #ece9d8;
}
.drop::before {
    content: "";
    position: absolute;
    z-index: 1;
    right: 5px;
    top: 4px;
    width: 3px;
    height: 3px;
    border: solid #b5b2a2;
    border-width: 0 2px 2px 0;
    transform: rotate(45deg);
}
.drop.lit::after {
    background: #bed2fa;
    border-color: #a0b8ec;
}
.drop.lit::before {
    border-color: #33497a;
}
.character {
    right: 192px;
    top: 9px;
}
.char-row, .char-grid {
    margin: 0 3px;
    border-bottom: 1px solid #bab7a8;
    box-shadow: 0 1px #fff;
}
.char-row {
    display: flex;
}
.font-row {
    gap: 3px;
    padding: 5px 0 3px;
}
.font-row .drop:first-child {
    flex: 1;
}
.font-row .drop:last-child {
    width: 63px;
}
.char-grid {
    display: grid;
    grid-template-columns: 21px 61px 24px 60px;
    grid-auto-rows: 16px;
    gap: 1px 0;
    align-items: center;
    padding: 3px 0;
}
.char-grid > input, .color-box {
    width: 47px;
    height: 16px;
    padding-left: 2px;
    border: 1px solid #a5b8cc;
    color: #aaa798;
}
.color-box {
    border: 1px solid #111;
    background: #fff;
    color: #000;
    font-weight: bold;
}
.color-label {
    text-align: right;
    margin: 0 2px 0 -4px;
}
.glyph {
    text-align: center;
    font: bold 14px/16px "Liberation Serif", serif;
}
.glyph svg {
    display: block;
    width: 14px;
    height: 14px;
    margin: auto;
}
.glyph small {
    font-size: 10px;
}
.glyph.tiny {
    font: bold 8px/14px "Liberation Sans", sans-serif;
}
.glyph.heavy {
    text-decoration: underline;
}
.glyph.shade {
    justify-self: center;
    padding: 0 1px;
    background: #bbb;
    line-height: 10px;
}
.glyph sup, .glyph sub, .styles-row sup, .styles-row sub {
    font-size: 7px;
    line-height: 1px;
}
.styles-row {
    height: 24px;
    align-items: center;
    padding-left: 12px;
    gap: 3px;
}
.styles-row button {
    width: 13px;
    font: bold 11px/16px "Liberation Serif", serif;
    white-space: nowrap;
}
.styles-row .gap {
    margin-left: 9px;
}
.styles-row small {
    font-size: 8px;
}
.lang-row {
    gap: 4px;
    padding: 3px 2px 5px 0;
    border: 0;
    box-shadow: none;
}
.lang-row .drop:first-child {
    flex: 1;
}
.lang-row .drop:last-child {
    width: 57px;
}
.aa {
    width: 14px;
    font: 12px/16px "Liberation Serif", serif;
}
.aa sup {
    font-size: 11px;
    line-height: 1px;
}

/* navigator */
.navigator {
    right: 8px;
    top: 7px;
}
.preview {
    padding: 5px 2px 4px 0;
}
.preview svg {
    display: block;
    width: 43px;
    height: 59px;
    margin: auto;
    border: 2px solid #c8242c;
    outline: 1px solid #333;
    outline-offset: -1px;
}
.zoombar {
    display: flex;
    align-items: center;
    height: 12px;
    border-top: 1px solid #444;
}
.zoombar input[type="text"] {
    width: 50px;
    height: 11px;
    padding-left: 2px;
    border-right: 1px solid #888;
    color: #999687;
}
.zoombar svg {
    width: 20px;
    height: 9px;
}
.zoombar input[type="range"] {
    width: 68px;
    height: 10px;
    margin: 0 2px;
    background: linear-gradient(#222, #222) center / 100% 1px no-repeat;
}
.zoombar input::-webkit-slider-thumb {
    appearance: none;
    width: 7px;
    height: 4px;
    margin-top: 4px;
    background: #222;
    clip-path: polygon(50% 0, 100% 100%, 0 100%);
}
.sizer {
    width: 11px;
    height: 10px;
    margin-left: auto;
    background: radial-gradient(#aaa798 1px, transparent 1px) 0 0 / 4px 4px;
}

/* shared list parts */
.scroller {
    display: flex;
    overflow: hidden;
}
.scrollbar {
    flex: none;
    width: 13px;
    display: flex;
    flex-direction: column;
    justify-content: space-between;
    background: #fff;
}
.scrollbar button {
    position: relative;
    width: 11px;
    height: 13px;
    border: 1px solid #dedbcb;
    border-radius: 2px;
    background: #f2f0e6;
}
.scrollbar button::before {
    content: "";
    position: absolute;
    left: 2px;
    top: 5px;
    width: 4px;
    height: 4px;
    border: solid #bbb8a8;
    border-width: 1px 0 0 1px;
    transform: rotate(45deg);
}
.scrollbar .down::before {
    top: 2px;
    transform: rotate(225deg);
}
.footer {
    display: flex;
    align-items: center;
    justify-content: flex-end;
    gap: 14px;
    height: 12px;
    border-top: 1px solid #333;
}
.footer svg {
    width: 11px;
    height: 10px;
}
.footer .sizer {
    margin-left: -7px;
    border-left: 1px solid #333;
}
.dim {
    opacity: .5;
}

/* styles */
.styles {
    right: 7px;
    top: 117px;
}
.styles .palette-title, .history .palette-title, .layers .palette-title {
    height: 15px;
}
.styles .scroller {
    height: 84px;
}
.swatches {
    flex: 1;
    display: grid;
    grid-template-columns: repeat(6, 1fr);
    grid-auto-rows: 27px;
}
.swatches i {
    border-right: 1px solid #222;
    border-bottom: 1px solid #222;
    padding: 7px 0 0 6px;
    background: #d8d8d8;
}
.swatches i::before {
    content: "";
    display: block;
    box-sizing: border-box;
    width: 13px;
    height: 13px;
}
.swatches .none { background: #ece9d8; }
.swatches .none::before { border: 1px solid #222; background: linear-gradient(45deg, #fff 45%, #d01818 45%, #d01818 55%, #fff 55%); }
.fire::before { background: radial-gradient(#ffc830, #f04a10 50%, #701008); }
.plain::before { background: #5a5a5a; box-shadow: 0 0 0 3px #eee; }
.rings::before { background: radial-gradient(circle at 60% 60%, #777 2px, #222 3px, #999 4px, #333 6px, #555); }
.sky::before { background: linear-gradient(135deg, #9cd2f5, #2b77c0 60%, #fff); }
.gray::before { background: #a2a2a2; }
.steel::before { background: linear-gradient(135deg, #333, #888 60%, #eee); }
.olive::before { background: #706440; }
.bronze::before { background: linear-gradient(#5c4c28, #a08c5c); }
.red::before { background: linear-gradient(#882430, #e83c48 30%, #a04058 50%, #e83c48 70%, #701828); }
.mix::before { background: conic-gradient(#222, #e8c820, #222, #2858b0, #e04030, #fff, #222, #1b7848, #fff, #222); }
.gold::before { background: radial-gradient(#8c7818 30%, #f4d818 60%, #c8a410); }
.rust::before { background: linear-gradient(160deg, #b07858, #d08848 50%, #6c7850); }
.ice::before { background: linear-gradient(#78b8ec, #c0e0fa 60%, #88b8e8); }
.horizon::before { background: linear-gradient(#4890d0, #d8ecf8 45%, #46341c 55%, #e0b040); }
.noise::before { background: repeating-conic-gradient(#eee 0 8deg, #555 8deg 16deg); }
.violet::before { background: linear-gradient(#6048a8, #a05098 50%, #4050a8); box-shadow: 2px 2px #445; }
.coal::before { background: #ddd; border: 4px solid #222; border-right-color: #444; border-bottom-color: #555; }

/* history */
.history {
    right: 3px;
    top: 246px;
}
.history .scroller {
    height: 66px;
}
.states {
    flex: 1;
    margin-top: -8px;
}
.states li {
    display: flex;
    align-items: center;
    height: 17px;
    border-bottom: 1px solid #fff;
}
.states i {
    width: 20px;
    height: 17px;
    flex: none;
    border: 2px solid #ece9d8;
    border-right: 1px solid #444;
    box-shadow: inset 1px 1px #b5b2a2, inset -1px -1px #fff;
}
.states svg {
    width: 14px;
    height: 14px;
    margin: 0 6px 0 7px;
}

/* layers */
.layers {
    right: 3px;
    top: 356px;
}
.layer-options {
    display: flex;
    align-items: center;
    gap: 3px;
    height: 21px;
    padding: 0 3px;
    border-bottom: 1px solid #fff;
    box-shadow: inset 0 -1px #c9c6b6;
    color: #aaa798;
}
.layer-options .drop {
    width: 86px;
}
.layer-options .drop select {
    height: 13px;
}
.layer-options .drop::after {
    height: 9px;
}
.layer-options .drop::before {
    top: 3px;
}
.layer-options label {
    margin-left: auto;
}
.layer-options.lock {
    height: 19px;
}
.lock svg {
    width: 60px;
    height: 12px;
    margin-left: 4px;
    opacity: .8;
}
.amount {
    position: relative;
}
.amount input {
    display: block;
    width: 39px;
    height: 13px;
    padding-left: 2px;
    border: 1px solid #c9c6b6;
}
.amount::after {
    content: "";
    position: absolute;
    right: 4px;
    top: 4px;
    border: 3px solid transparent;
    border-left-color: #aaa798;
    border-right: 0;
}
.layers .scroller {
    height: 436px;
    border-top: 1px solid #333;
}
.stack {
    flex: 1;
    min-width: 0;
}
.stack li {
    display: flex;
    height: 31px;
}
.stack .effect {
    height: 16px;
}
.stack i {
    flex: none;
    width: 19px;
    border-right: 1px solid #c9c6b6;
    padding: 8px 2px 8px 3px;
}
.stack i + i {
    padding: 8px 3px 8px 2px;
    border-right: 1px solid #222;
}
.stack i::before, .stack i svg {
    content: "";
    display: block;
    box-sizing: border-box;
    width: 13px;
    height: 13px;
    border: 1px solid #b5b2a2;
    border-right-color: #fff;
    border-bottom-color: #fff;
}
.stack .effect i {
    padding-top: 1px;
    padding-bottom: 1px;
}
.stack .effect i + i::before {
    display: none;
}
.stack i:has(svg)::before {
    display: none;
}
.stack li > div {
    flex: 1;
    min-width: 0;
    display: flex;
    align-items: center;
    padding: 0 14px 0 2px;
    white-space: nowrap;
}
.layer {
    border-top: 1px solid #fff;
}
.stack .layer:first-child {
    height: 30px;
    border-top: 0;
}
.stack .effect > div {
    padding-left: 14px;
    background: #fff;
}
.stack .shadow > div {
    background: linear-gradient(90deg, #fff 14px, transparent 14px), repeating-linear-gradient(90deg, #222 0 1px, #fff 1px 2px) 0 0 / 100% 1px no-repeat, #fff;
}
.stack li > div svg {
    width: 11px;
    height: 11px;
}
.shadow > div svg {
    margin-right: 4px;
}
.stack li > div .thumb {
    flex: none;
    width: 20px;
    height: 27px;
    margin-right: 3px;
    border: 1px solid #222;
    background: #fff;
}
.stack li > div .thumb.text {
    width: 26px;
    color: #000;
    font: 15px/25px "Liberation Serif", serif;
    text-align: center;
}
.stack u {
    position: relative;
    margin: 0 4px 0 auto;
    border: 5px solid transparent;
    border-top: 5px solid #222;
    border-bottom: 0;
}
.stack u::after {
    content: "";
    position: absolute;
    left: -3px;
    top: -4px;
    border: 3px solid transparent;
    border-top-color: #b0aef0;
    border-bottom: 0;
}
.current > div {
    background: #316ac5;
    color: #fff;
    font-weight: bold;
}
.layers .footer {
    gap: 13px;
}
.layers .footer .sizer {
    margin-left: -5px;
}

/* status bar */
.status {
    flex: none;
    display: flex;
    align-items: center;
    height: 15px;
    border-top: 1px solid #fff;
    border-bottom: 1px solid #fff;
}
.status input {
    width: 40px;
    height: 14px;
    padding-left: 10px;
    border: 1px solid #222;
    color: #aaa798;
}
.status svg {
    width: 10px;
    height: 11px;
    margin: 0 4px 0 5px;
}
.doc-size {
    width: 171px;
    padding-left: 2px;
    border-left: 1px solid #fff;
}
.status button {
    margin: 0 5px 0 3px;
    border: 5px solid transparent;
    border-left-color: #000;
    border-right: 0;
}
.status-space {
    flex: 1;
    height: 13px;
    border-left: 1px solid #fff;
}
.status-end {
    width: 97px;
    height: 13px;
    border-left: 1px solid #fff;
}

/* taskbar */
.taskbar {
    flex: none;
    display: flex;
    height: 25px;
    background: linear-gradient(#3a80f0, #245edb 20%, #245edb 85%, #1941a5);
    color: #fff;
    font-size: 9px;
}
.start {
    width: 81px;
    display: flex;
    align-items: center;
    gap: 4px;
    padding-left: 8px;
    border-radius: 0 10px 10px 0;
    background: linear-gradient(#5eac56, #3c8c3c 25%, #3f9a3c 75%, #2a6a2a);
    box-shadow: inset -3px 0 4px #2a6a2a;
    font: italic bold 14px/20px "Liberation Sans", sans-serif;
    text-shadow: 1px 1px #1f4f1f;
}
.start svg {
    width: 16px;
    height: 16px;
}
.tasks {
    flex: 0 1 1075px;
    display: flex;
    gap: 1px;
    padding: 2px 0 2px 8px;
}
.tasks button {
    flex: 1 1 0;
    min-width: 0;
    display: flex;
    align-items: center;
    gap: 3px;
    padding-left: 7px;
    border-radius: 2px;
    background: linear-gradient(#5a94fa, #3c81f3 20%, #3a7af0);
    box-shadow: inset -1px 0 #1c4fc0;
    white-space: nowrap;
}
.tasks .pressed {
    background: #1c50b8;
}
.tasks svg, .tray svg {
    width: 14px;
    height: 14px;
}
.tray {
    width: 167px;
    display: flex;
    align-items: center;
    gap: 1px;
    margin-left: auto;
    padding-left: 7px;
    border-left: 1px solid #0f4a9c;
    background: linear-gradient(#35b4f8, #0f94ea 20%, #1290e8 85%, #0d6cc0);
}
.tray time {
    margin-left: 4px;
}
```
